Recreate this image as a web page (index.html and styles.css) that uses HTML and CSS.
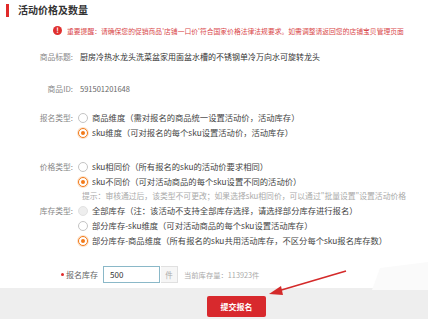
FILE: index.html
```html
<!DOCTYPE html>
<html lang="zh">
<head>
<meta charset="utf-8">
<link rel="stylesheet" href="styles.css">
</head>
<body>
<div class="page">
  <div class="head"><span class="bar"></span><span class="title">活动价格及数量</span></div>
  <div class="notice"><span class="warn">!</span><span class="ntext">重要提醒：请确保您的促销商品'店铺一口价'符合国家价格法律法规要求。如需调整请返回您的店铺宝贝管理页面</span></div>

  <div class="row r-title"><div class="label">商品标题:</div><div class="val">厨房冷热水龙头洗菜盆家用面盆水槽的不锈钢单冷万向水可旋转龙头</div></div>
  <div class="row r-id"><div class="label">商品ID:</div><div class="val">591501201648</div></div>

  <div class="row r-type"><div class="label">报名类型:</div>
    <div class="opts">
      <div class="opt"><span class="radio"></span>商品维度（需对报名的商品统一设置活动价，活动库存）</div>
      <div class="opt"><span class="radio on"></span>sku维度（可对报名的每个sku设置活动价，活动库存）</div>
    </div>
  </div>

  <div class="row r-price"><div class="label">价格类型:</div>
    <div class="opts">
      <div class="opt"><span class="radio"></span>sku相同价（所有报名的sku的活动价要求相同）</div>
      <div class="opt"><span class="radio on"></span>sku不同价（可对活动商品的每个sku设置不同的活动价）</div>
      <div class="hint">提示：审核通过后，该类型不可更改；如果选择sku相同价，可以通过"批量设置"设置活动价格</div>
    </div>
  </div>

  <div class="row r-stock"><div class="label">库存类型:</div>
    <div class="opts">
      <div class="opt"><span class="radio dis"></span>全部库存（注：该活动不支持全部库存选择，请选择部分库存进行报名）</div>
      <div class="opt"><span class="radio"></span>部分库存-sku维度（可对活动商品的每个sku设置活动库存）</div>
      <div class="opt"><span class="radio on"></span>部分库存-商品维度（所有报名的sku共用活动库存，不区分每个sku报名库存数）</div>
    </div>
  </div>

  <div class="qty"><span class="req"></span><span class="qlabel">报名库存</span><span class="input">500</span><span class="addon">件</span><span class="cur">当前库存量：113923件</span></div>

  <div class="foot"><button class="submit">提交报名</button></div>

  <svg class="overlay" width="428" height="319" viewBox="0 0 428 319">
    <polygon points="380,268 428,262 428,290 372,290" fill="#fafafa"/>
    <line x1="346" y1="271" x2="278" y2="291" stroke="#d42a2a" stroke-width="1.6"/>
    <polygon points="269,294 281,286 283,295" fill="#d42a2a"/>
  </svg>
</div>
</body>
</html>
```
FILE: styles.css
```css
html, body { margin: 0; padding: 0; background: #fff; }
body { width: 428px; height: 319px; overflow: hidden; font-family: "Noto Sans CJK SC", "Noto Sans", sans-serif; color: #444; }
.page { position: relative; width: 428px; height: 319px; white-space: nowrap; }

.head { display: flex; align-items: center; height: 20px; padding-left: 6px; }
.bar { width: 3px; height: 13px; background: #e02a2a; margin-right: 9px; }
.title { font-size: 10px; font-weight: 700; color: #333; line-height: 20px; }

.notice { display: flex; align-items: center; margin-top: 3px; padding-left: 53px; height: 15px; font-size: 6.8px; color: #d9484a; }
.ntext { overflow: hidden; }
.warn { width: 9px; height: 9px; border-radius: 50%; background: #e0302f; color: #fff; font-size: 7px; font-weight: 700; line-height: 9px; text-align: center; margin-right: 5px; flex: none; }

.row { display: flex; font-size: 8.3px; line-height: 15px; }
.label { width: 73px; flex: none; text-align: right; color: #888; font-size: 7.8px; }
.val { padding-left: 7px; color: #444; }
.r-title { margin-top: 11px; }
.r-title .val { color: #333; font-size: 8px; }
.r-id { margin-top: 17px; }
.r-id .val { font-size: 7.5px; color: #666; }
.r-type { margin-top: 14px; }
.r-price { margin-top: 19px; }
.r-stock { margin-top: 1px; }

.opts { display: flex; flex-direction: column; padding-left: 5px; }
.opt { display: flex; align-items: center; height: 15px; color: #444; }
.radio { width: 8px; height: 8px; border: 1px solid #c4c4c4; border-radius: 50%; background: #fff; margin-right: 4px; box-sizing: content-box; position: relative; flex: none; }
.radio.on { border-color: #f27a1a; box-shadow: 0 0 0 1px #fde3cc; }
.radio.on::after { content: ""; position: absolute; left: 2px; top: 2px; width: 4px; height: 4px; border-radius: 50%; background: #f27a1a; }
.radio.dis { background: #eee; border-color: #e2e2e2; }
.hint { font-size: 7.8px; color: #aaa; line-height: 13px; padding-left: 4px; }

.qty { display: flex; align-items: center; margin-top: 18px; padding-left: 61px; height: 17px; font-size: 8px; }
.req { width: 3px; height: 3px; border-radius: 50%; background: #e02a2a; margin-right: 2px; flex: none; }
.qlabel { color: #666; margin-right: 5px; }
.input { width: 49px; height: 15px; border: 1px solid #8ab8c8; line-height: 15px; padding-left: 6px; color: #333; font-size: 8px; }
.addon { width: 16px; height: 15px; border: 1px solid #e0e0e0; border-left: none; background: #f6f6f6; color: #aaa; text-align: center; line-height: 15px; margin-left: 1px; font-size: 7.5px; }
.cur { margin-left: 6px; font-size: 7.3px; color: #aaa; }

.foot { position: absolute; left: 0; right: 0; top: 288px; bottom: 0; background: #eeeeee; display: flex; justify-content: flex-start; padding-top: 8px; padding-left: 207px; box-sizing: border-box; }
.submit { width: 59px; height: 21px; border: none; border-radius: 2px; background: #d8292d; color: #fff; font-family: inherit; font-size: 8px; font-weight: 700; padding: 0; }

.overlay { position: absolute; left: 0; top: 0; pointer-events: none; }
```
